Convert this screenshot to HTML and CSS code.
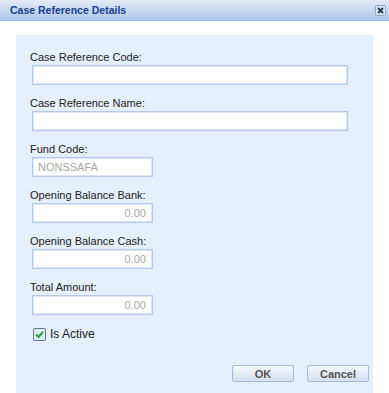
FILE: index.html
```html
<!DOCTYPE html>
<html lang="en">
  <head>
    <meta charset="UTF-8" />
    <meta name="viewport" content="width=device-width, initial-scale=1.0" />
    <link rel="stylesheet" href="styles.css">
    <title>Case Reference Details</title>
  </head>
  <body>
    <div class="window">
      <div class="titleBar">
        <span class="title">Case Reference Details</span>
        <span class="closeBtn">
          <svg width="11" height="11" viewBox="0 0 11 11">
            <rect x="0.5" y="0.5" width="10" height="10" rx="1" fill="#d9e4f3" stroke="#8ea6c8" />
            <path d="M3 3 L8 8 M8 3 L3 8" stroke="#1f3555" stroke-width="1.8" />
          </svg>
        </span>
      </div>

      <div class="body">
        <form class="panel">
          <div class="field">
            <label for="refCode">Case Reference Code:</label>
            <input id="refCode" type="text" class="wide" />
          </div>
          <div class="field">
            <label for="refName">Case Reference Name:</label>
            <input id="refName" type="text" class="wide" />
          </div>
          <div class="field">
            <label for="fundCode">Fund Code:</label>
            <input id="fundCode" type="text" class="short" value="NONSSAFA" readonly />
          </div>
          <div class="field">
            <label for="balBank">Opening Balance Bank:</label>
            <input id="balBank" type="text" class="short num" value="0.00" readonly />
          </div>
          <div class="field">
            <label for="balCash">Opening Balance Cash:</label>
            <input id="balCash" type="text" class="short num" value="0.00" readonly />
          </div>
          <div class="field">
            <label for="total">Total Amount:</label>
            <input id="total" type="text" class="short num" value="0.00" readonly />
          </div>

          <div class="checkRow">
            <svg width="13" height="13" viewBox="0 0 13 13">
              <rect x="0.5" y="0.5" width="12" height="12" rx="1.5" fill="#dfe9f7" stroke="#5e7595" />
              <path d="M3 6.5 L5.5 9 L10 3.8" fill="none" stroke="#2aa02a" stroke-width="2" />
            </svg>
            <span>Is Active</span>
          </div>

          <div class="buttons">
            <button type="button" class="btn">OK</button>
            <button type="button" class="btn">Cancel</button>
          </div>
        </form>
      </div>
    </div>
  </body>
</html>
```

FILE: styles.css
```css
body {
  margin: 0;
  background: #ffffff;
  font-family: "Liberation Sans", Arial, sans-serif;
}

.window {
  width: 389px;
  height: 393px;
  display: flex;
  flex-direction: column;
  overflow: hidden;
}

.titleBar {
  height: 21px;
  display: flex;
  align-items: center;
  justify-content: space-between;
  padding: 0 3px 0 10px;
  background: linear-gradient(#e3ebf7, #c5d7f0 55%, #aec7ea);
  border-bottom: 1px solid #99bbe8;
  box-sizing: border-box;
}

.title {
  font-size: 10.5px;
  font-weight: bold;
  color: #15428b;
}

.closeBtn {
  display: flex;
  margin-top: 1px;
}

.body {
  flex: 1;
  padding: 14px 16px 0 16px;
  display: flex;
}

.panel {
  flex: 1;
  background: #e6effd;
  padding: 15px 4px 0 14px;
  margin: 0;
}

.field {
  margin-bottom: 11px;
}

label {
  display: block;
  font-size: 11px;
  line-height: 14px;
  color: #222;
  margin-bottom: 1px;
}

input {
  display: block;
  box-sizing: border-box;
  height: 20px;
  margin-left: 2px;
  border: 1px solid #b3c9ec;
  box-shadow: inset 0 0 0 1px #dbe6f8;
  background: #ffffff;
  font-family: "Liberation Sans", Arial, sans-serif;
  font-size: 11px;
  color: #a8a8a8;
  padding: 0 5px;
  outline: none;
}

.wide {
  width: 316px;
}

.short {
  width: 121px;
}

.num {
  text-align: right;
  padding-right: 6px;
}

.checkRow {
  display: flex;
  align-items: center;
  gap: 4px;
  margin: 0 0 0 3px;
  padding-top: 1px;
  font-size: 12px;
  color: #222;
}

.buttons {
  display: flex;
  justify-content: flex-end;
  gap: 13px;
  margin-top: 24px;
}

.btn {
  width: 62px;
  height: 17px;
  padding: 0;
  border: 1px solid #a3bbdd;
  border-radius: 2px;
  background: linear-gradient(#f6f9fd, #e3ebf6 50%, #d5e1f1);
  font-family: "Liberation Sans", Arial, sans-serif;
  font-size: 11px;
  font-weight: bold;
  color: #555;
  cursor: pointer;
}
```
